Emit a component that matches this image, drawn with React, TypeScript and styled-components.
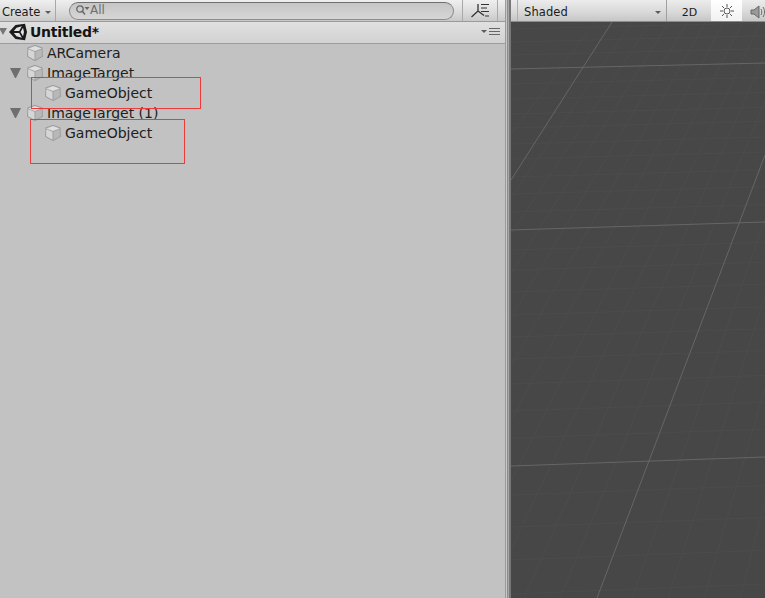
import React from "react";
import styled, { createGlobalStyle } from "styled-components";

const Global = createGlobalStyle`
  html, body { margin: 0; padding: 0; background: #c2c2c2; }
  #root { width: 765px; height: 598px; overflow: hidden; }
`;

const Page = styled.div`
  display: flex;
  width: 765px;
  height: 598px;
  overflow: hidden;
  font-family: "DejaVu Sans", "Liberation Sans", sans-serif;
  color: #1b1b1b;
`;

const Hierarchy = styled.section`
  position: relative;
  flex: 0 0 505px;
  display: flex;
  flex-direction: column;
  background: #c2c2c2;
`;

const Toolbar = styled.div`
  flex: 0 0 22px;
  display: flex;
  align-items: stretch;
  box-sizing: border-box;
  background: linear-gradient(#efefef, #dcdcdc 55%, #c9c9c9);
  border-bottom: 1px solid #9a9a9a;
`;

const CreateButton = styled.div`
  flex: 0 0 56px;
  display: flex;
  align-items: center;
  gap: 5px;
  box-sizing: border-box;
  padding: 3px 0 0 2px;
  font-size: 11.5px;
  border-right: 1px solid #a8a8a8;
`;

const Caret = styled.span`
  width: 0;
  height: 0;
  border-left: 3px solid transparent;
  border-right: 3px solid transparent;
  border-top: 3px solid #5c5c5c;
`;

const SearchZone = styled.div`
  flex: 1;
  display: flex;
  align-items: flex-start;
  padding: 2px 0 0 13px;
`;

const SearchField = styled.div`
  width: 385px;
  height: 18px;
  display: flex;
  align-items: center;
  box-sizing: border-box;
  padding: 0 0 2px 5px;
  border: 1px solid #8b8b8b;
  border-top-color: #6f6f6f;
  border-radius: 9px;
  background: linear-gradient(#c6c6c6, #d6d6d6);
  color: #6e6e6e;
  font-size: 12px;
`;

const FilterButton = styled.div`
  flex: 0 0 36px;
  display: flex;
  align-items: center;
  justify-content: center;
  box-sizing: border-box;
  border-left: 1px solid #a8a8a8;
  border-right: 1px solid #a8a8a8;
  margin-right: 7px;
`;

const SceneHeader = styled.div`
  flex: 0 0 22px;
  display: flex;
  align-items: center;
  box-sizing: border-box;
  padding: 0 5px 2px 0;
  background: linear-gradient(#e0e0e0, #d2d2d2);
  border-bottom: 1px solid #9c9c9c;
`;

const SceneFold = styled.span`
  width: 0;
  height: 0;
  margin: 0 2px 0 -1px;
  border-left: 4px solid transparent;
  border-right: 4px solid transparent;
  border-top: 7px solid #777;
`;

const SceneTitle = styled.span`
  margin-left: 3px;
  font-size: 14px;
  font-weight: 700;
  letter-spacing: -0.25px;
  color: #141414;
`;

const SceneMenu = styled.div`
  margin-left: auto;
  display: flex;
  align-items: center;
  gap: 2px;
`;

const Tree = styled.div`
  display: flex;
  flex-direction: column;
  margin-top: -1px;
`;

const Row = styled.div<{ $depth: number }>`
  height: 20px;
  display: flex;
  align-items: center;
  padding-left: ${(p) => 10 + p.$depth * 18}px;
  font-size: 14px;
  color: #202020;
`;

const Fold = styled.span<{ $open: boolean }>`
  flex: 0 0 11px;
  height: 0;
  box-sizing: border-box;
  margin-right: 5px;
  border-left: 5.5px solid transparent;
  border-right: 5.5px solid transparent;
  border-top: 10px solid ${(p) => (p.$open ? "#6f6f6f" : "transparent")};
`;

const Label = styled.span`
  margin-left: 3px;
`;

const Annotation = styled.div`
  position: absolute;
  box-sizing: border-box;
  border: 1px solid #ef3a3a;
`;

const Splitter = styled.div`
  flex: 0 0 6px;
  background: linear-gradient(90deg, #9a9a9a 0 1px, #c8c8c8 1px 2px, #8c8c8c 2px 3px, #a8a8a8 3px 4px, #777 4px 6px);
`;

const SceneView = styled.section`
  flex: 1;
  min-width: 0;
  display: flex;
  flex-direction: column;
  background: #474747;
`;

const SceneToolbar = styled.div`
  flex: 0 0 22px;
  display: flex;
  align-items: stretch;
  box-sizing: border-box;
  padding-left: 6px;
  background: linear-gradient(#ececec, #dadada 55%, #c6c6c6);
  border-bottom: 1px solid #8c8c8c;
`;

const ShadedSelect = styled.div`
  flex: 0 0 150px;
  display: flex;
  align-items: center;
  justify-content: space-between;
  box-sizing: border-box;
  padding: 3px 5px 0 6px;
  font-size: 11.5px;
  letter-spacing: 0.1px;
  border-left: 1px solid #b0b0b0;
  border-right: 1px solid #a0a0a0;
`;

const ToolButton = styled.div<{ $lit?: boolean; $width: number }>`
  flex: 0 0 ${(p) => p.$width}px;
  margin-left: ${(p) => (p.$lit ? 7 : 8)}px;
  display: flex;
  align-items: center;
  justify-content: center;
  box-sizing: border-box;
  padding-top: ${(p) => (p.$lit ? 0 : 3)}px;
  font-size: 11px;
  background: ${(p) => (p.$lit ? "linear-gradient(#ffffff, #f2f2f2)" : "transparent")};
`;

const Viewport = styled.svg`
  flex: 1;
  display: block;
  width: 100%;
  min-height: 0;
`;

const CubeIcon = () => (
  <svg width="18" height="18" viewBox="0 0 18 18" style={{ flex: "0 0 18px" }}>
    <path d="M9 .8 16.600 3.600 17 12.800 9 17.300 1 12.800 1.400 3.600z" fill="#9f9f9f" />
    <path d="M2.300 4.400 9 2 15.700 4.400 9 6.900z" fill="#dfdfdf" />
    <path d="M2.200 5.200 8.500 7.700V15.800L2.200 12.300z" fill="#d6d6d6" />
    <path d="M9.500 7.700 15.800 5.200V12.300L9.500 15.800z" fill="#b8b8b8" />
  </svg>
);

const UnityLogo = () => (
  <svg width="18" height="18" viewBox="0 0 18 18" style={{ flex: "0 0 18px" }}>
    <path d="M6.500 2 16 .8 18 9 16 17.200 6.500 16 0 9z" fill="#1a1a1a" />
    <path d="M7.500 4.800 12.800 3.200 10.200 8H4.800zM4.800 10H10.200L12.800 14.800 7.500 13.200zM11.500 9 14 4.800 15 9 14 13.200z" fill="#e2e2e2" />
  </svg>
);

const TreeRow = ({ depth, open, children }: { depth: number; open?: boolean; children: React.ReactNode }) => (
  <Row $depth={depth}>
    <Fold $open={!!open} />
    <CubeIcon />
    <Label>{children}</Label>
  </Row>
);

const minorY = [29, 42, 55, 84, 99, 114, 128, 144, 159, 177, 194, 212, 250, 270, 292, 315, 337, 359, 384, 411, 438, 495, 527, 560, 594];
const diagonals: number[] = [];
for (let i = -24; i <= 8; i += 1) {
  if (i !== 0 && i !== -11) diagonals.push(i);
}

export default function App() {
  return (
    <Page>
      <Global />
      <Hierarchy>
        <Toolbar>
          <CreateButton>
            Create <Caret />
          </CreateButton>
          <SearchZone>
            <SearchField>
              <svg width="15" height="12" viewBox="0 0 15 12">
                <circle cx="5" cy="5" r="3.2" fill="none" stroke="#666" strokeWidth="1.3" />
                <path d="M7.500 7.500 10 10.500" stroke="#666" strokeWidth="1.4" />
                <path d="M9.500 3h5L12 6z" fill="#666" />
              </svg>
              All
            </SearchField>
          </SearchZone>
          <FilterButton>
            <svg width="20" height="16" viewBox="0 0 20 16" fill="none" stroke="#333">
              <path d="M8 1v7M8 8 1.500 14M8 8l6 4.500" strokeWidth="1.3" />
              <path d="M11 1.500h8M11 5h6M11 8.500h8M15 13h4" strokeWidth="1" />
            </svg>
          </FilterButton>
        </Toolbar>
        <SceneHeader>
          <SceneFold />
          <UnityLogo />
          <SceneTitle>Untitled*</SceneTitle>
          <SceneMenu>
            <Caret />
            <svg width="11" height="7" viewBox="0 0 11 7" stroke="#666">
              <path d="M0 .5h11M0 3.500h11M0 6.500h11" />
            </svg>
          </SceneMenu>
        </SceneHeader>
        <Tree>
          <TreeRow depth={0}>ARCamera</TreeRow>
          <TreeRow depth={0} open>
            ImageTarget
          </TreeRow>
          <TreeRow depth={1}>GameObject</TreeRow>
          <TreeRow depth={0} open>
            ImageTarget (1)
          </TreeRow>
          <TreeRow depth={1}>GameObject</TreeRow>
        </Tree>
        <Annotation style={{ left: 31, top: 77, width: 170, height: 32 }} />
        <Annotation style={{ left: 30, top: 119, width: 155, height: 45 }} />
      </Hierarchy>
      <Splitter />
      <SceneView>
        <SceneToolbar>
          <ShadedSelect>
            Shaded <Caret />
          </ShadedSelect>
          <ToolButton $width={29}>2D</ToolButton>
          <ToolButton $lit $width={31}>
            <svg width="16" height="16" viewBox="0 0 16 16" stroke="#555" fill="none">
              <circle cx="8" cy="8" r="3" />
              <path d="M8 1v3M8 12v3M1 8h3M12 8h3M3 3l2 2M11 11l2 2M13 3l-2 2M5 11l-2 2" />
            </svg>
          </ToolButton>
          <ToolButton $width={16}>
            <svg width="18" height="16" viewBox="0 0 18 16" fill="#9a9a9a" stroke="#666" style={{ flex: "0 0 18px" }}>
              <path d="M1 6h3l5-4v12l-5-4H1z" />
              <path d="M11 5c1 2 1 4 0 6M13 3c2 3 2 7 0 10" fill="none" />
            </svg>
          </ToolButton>
        </SceneToolbar>
        <Viewport viewBox="511 22 254 576" preserveAspectRatio="none">
          {minorY.map((y) => (
            <line key={y} x1="511" y1={y} x2="765" y2={y - 6 - (y / 598) * 4} stroke="#4c4c4c" />
          ))}
          {diagonals.map((i) => (
            <line key={i} x1={816 + 18.4 * i} y1="22" x2={596 + 36 * i} y2="598" stroke={i < -12 ? "#4a4a4a" : "#4c4c4c"} />
          ))}
          <line x1="511" y1="69" x2="765" y2="63" stroke="#666" />
          <line x1="511" y1="230" x2="765" y2="222" stroke="#666" />
          <line x1="511" y1="466" x2="765" y2="457" stroke="#666" />
          <line x1="612" y1="22" x2="511" y2="180" stroke="#666" />
          <line x1="765" y1="155" x2="597" y2="598" stroke="#666" />
        </Viewport>
      </SceneView>
    </Page>
  );
}
